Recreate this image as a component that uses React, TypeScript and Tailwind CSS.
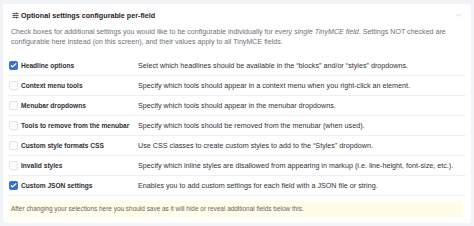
import React from 'react'
import { SlidersHorizontal, ChevronDown, Check } from 'lucide-react'

type Option = {
  label: string
  description: string
  checked: boolean
}

const options: Option[] = [
  { label: 'Headline options', description: 'Select which headlines should be available in the \u201cblocks\u201d and/or \u201cstyles\u201d dropdowns.', checked: true },
  { label: 'Context menu tools', description: 'Specify which tools should appear in a context menu when you right-click an element.', checked: false },
  { label: 'Menubar dropdowns', description: 'Specify which tools should appear in the menubar dropdowns.', checked: false },
  { label: 'Tools to remove from the menubar', description: 'Specify which tools should be removed from the menubar (when used).', checked: false },
  { label: 'Custom style formats CSS', description: 'Use CSS classes to create custom styles to add to the \u201cStyles\u201d dropdown.', checked: false },
  { label: 'Invalid styles', description: 'Specify which inline styles are disallowed from appearing in markup (i.e. line-height, font-size, etc.).', checked: false },
  { label: 'Custom JSON settings', description: 'Enables you to add custom settings for each field with a JSON file or string.', checked: true },
]

const OptionRow: React.FC<{ option: Option }> = ({ option }) => {
  return (
    <div className="flex items-center h-[20px] border-b border-[#eef0f2]">
      <div className="w-[13px] pl-[1px] shrink-0">
        {option.checked ? (
          <div className="w-[9px] h-[9px] rounded-[2px] bg-[#3b6fd1] flex items-center justify-center">
            <Check className="w-[7px] h-[7px] text-white" strokeWidth={4} />
          </div>
        ) : (
          <div className="w-[9px] h-[9px] rounded-[2px] border border-[#e2e5e9] bg-[#fcfcfd]" />
        )}
      </div>
      <div className="w-[117px] shrink-0 font-bold text-[6.6px] text-[#2b2f33] whitespace-nowrap">{option.label}</div>
      <div className="text-[7.2px] text-[#2f3338] whitespace-nowrap">{option.description}</div>
    </div>
  )
}

const App: React.FC = () => {
  return (
    <div
      className="w-[474px] h-[226px] bg-[#f1f3f6] p-[3px] pt-[4px] overflow-hidden leading-[10px]"
      style={{ fontFamily: '"Liberation Sans", Arial, sans-serif' }}
    >
      <div className="h-[219px] bg-white rounded-[3px] px-[5px]">
        {/* Header */}
        <div className="flex items-center justify-between h-[23px] pl-[4px]">
          <div className="flex items-center">
            <SlidersHorizontal className="w-[7px] h-[7px] text-[#3a3f44] mr-[2px]" strokeWidth={3} />
            <span className="font-bold text-[7.2px] text-[#1f2327]">Optional settings configurable per-field</span>
          </div>
          <ChevronDown className="w-[7px] h-[7px] text-[#b4b9be] mr-[4px]" strokeWidth={2} />
        </div>

        {/* Intro */}
        <p className="text-[#6d7278] text-[7.1px] pl-[3px] whitespace-nowrap">
          Check boxes for additional settings you would like to be configurable individually for <em>every single TinyMCE field</em>. Settings NOT checked are
          <br />
          configurable here instead (on this screen), and their values apply to all TinyMCE fields.
        </p>

        {/* Options */}
        <div className="mt-[9px]">
          {options.map((option) => (
            <OptionRow key={option.label} option={option} />
          ))}
        </div>

        {/* Footer note */}
        <div className="mt-[5px] mr-[3px] h-[16px] flex items-center bg-[#fffde8] text-[#5f656b] text-[6.45px] pl-[3px] whitespace-nowrap">
          After changing your selections here you should save as it will hide or reveal additional fields below this.
        </div>
      </div>
    </div>
  )
}

export default App
